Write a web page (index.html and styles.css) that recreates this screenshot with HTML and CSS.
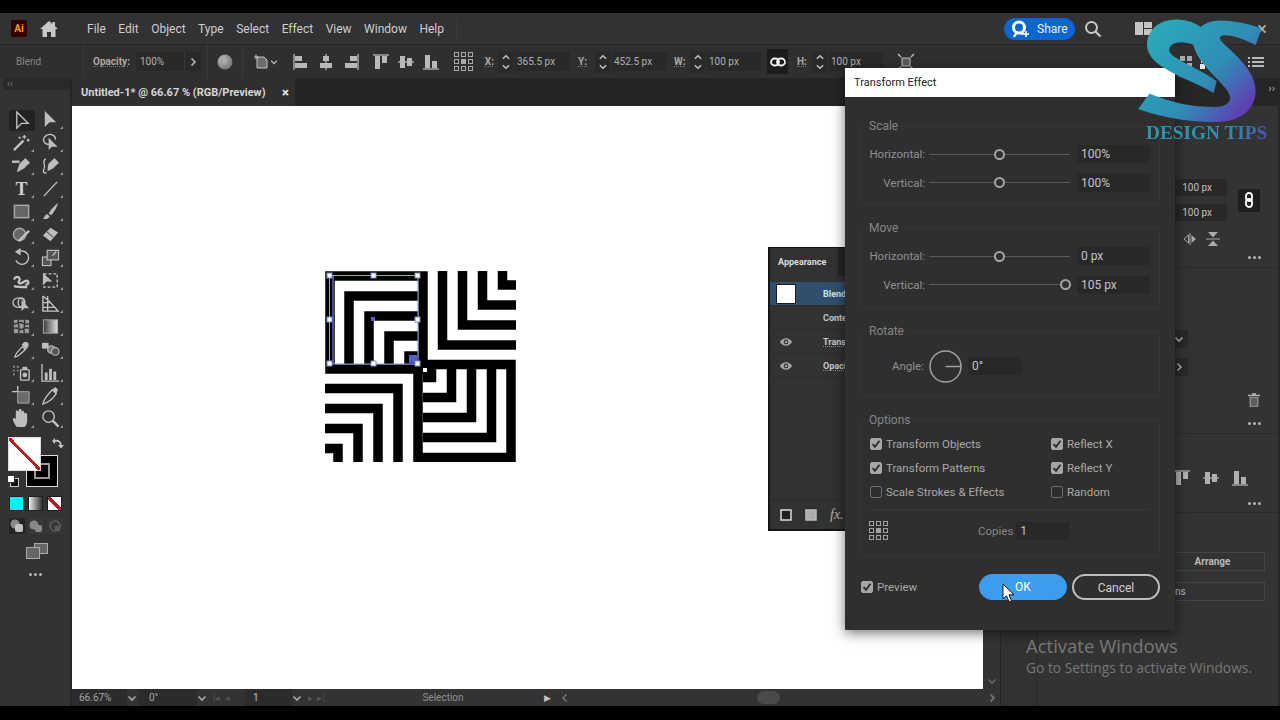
FILE: index.html
```html
<!DOCTYPE html>
<html lang="en">
<head>
    <meta charset="UTF-8">
    <title>Adobe Illustrator - Transform Effect</title>
    <link rel="stylesheet" href="styles.css">
</head>
<body>
<svg class="defs" width="0" height="0">
    <symbol id="chev-down" viewBox="0 0 10 10"><path d="M1.5 3.5 5 7l3.5-3.5" fill="none" stroke="currentColor" stroke-width="1.6"/></symbol>
    <symbol id="chev-up" viewBox="0 0 10 10"><path d="M1.5 6.5 5 3l3.5 3.5" fill="none" stroke="currentColor" stroke-width="1.6"/></symbol>
    <symbol id="chev-right" viewBox="0 0 10 10"><path d="M3.5 1.5 7 5l-3.5 3.5" fill="none" stroke="currentColor" stroke-width="1.6"/></symbol>
    <symbol id="tick" viewBox="0 0 12 12"><path d="M2.5 6.2 5 8.8l4.5-6" fill="none" stroke="#2b2b2b" stroke-width="1.8"/></symbol>
    <symbol id="al-left" viewBox="0 0 18 18"><path d="M2 1v16" stroke="currentColor" stroke-width="1.3"/><path d="M3 3h7v5H3zM3 10h12v5H3z" fill="currentColor"/></symbol>
    <symbol id="al-hc" viewBox="0 0 18 18"><path d="M9 1v16" stroke="currentColor" stroke-width="1.3"/><path d="M6 3h6v5H6zM3 10h12v5H3z" fill="currentColor"/></symbol>
    <symbol id="al-right" viewBox="0 0 18 18"><path d="M16 1v16" stroke="currentColor" stroke-width="1.3"/><path d="M8 3h7v5H8zM3 10h12v5H3z" fill="currentColor"/></symbol>
    <symbol id="al-top" viewBox="0 0 18 18"><path d="M1 2h16" stroke="currentColor" stroke-width="1.3"/><path d="M3 3h5v13H3zM10 3h5v7h-5z" fill="currentColor"/></symbol>
    <symbol id="al-vc" viewBox="0 0 18 18"><path d="M1 9h16" stroke="currentColor" stroke-width="1.3"/><path d="M3 3h5v12H3zM10 5h5v8h-5z" fill="currentColor"/></symbol>
    <symbol id="al-bottom" viewBox="0 0 18 18"><path d="M1 16h16" stroke="currentColor" stroke-width="1.3"/><path d="M3 2h5v13H3zM10 8h5v7h-5z" fill="currentColor"/></symbol>
    <symbol id="ref-grid" viewBox="0 0 19 19"><g fill="none" stroke="currentColor" stroke-width="1"><rect x=".5" y=".5" width="4" height="4"/><rect x="7.5" y=".5" width="4" height="4"/><rect x="14.5" y=".5" width="4" height="4"/><rect x=".5" y="7.5" width="4" height="4"/><rect x="14.5" y="7.5" width="4" height="4"/><rect x=".5" y="14.5" width="4" height="4"/><rect x="7.5" y="14.5" width="4" height="4"/><rect x="14.5" y="14.5" width="4" height="4"/></g><rect x="7" y="7" width="5" height="5" fill="currentColor"/></symbol>
    <symbol id="eye" viewBox="0 0 14 10"><path d="M1 5c3-5 9-5 12 0-3 5-9 5-12 0Z" fill="currentColor"/><circle cx="7" cy="5" r="2.4" fill="#323232"/><circle cx="7" cy="5" r="1.2" fill="currentColor"/></symbol>
    <symbol id="link" viewBox="0 0 16 10"><rect x="1" y="1.5" width="8" height="7" rx="3.5" fill="none" stroke="currentColor" stroke-width="1.8"/><rect x="7" y="1.5" width="8" height="7" rx="3.5" fill="none" stroke="currentColor" stroke-width="1.8"/></symbol>
</svg>

<div class="app">
    <div class="menubar">
        <div class="ai-logo">Ai</div>
        <svg class="home" width="18" height="16" viewBox="0 0 18 16"><path d="M9 0 0 8h2.5v8h4.5v-5h4v5h4.500V8H18l-3-2.700V1h-2.500v2L9 0Z" fill="#c8c8c8"/></svg>
        <div class="menu">
            <span>File</span><span>Edit</span><span>Object</span><span>Type</span><span>Select</span><span>Effect</span><span>View</span><span>Window</span><span>Help</span>
        </div>
        <div class="menu-right">
            <div class="share">
                <svg width="20" height="18" viewBox="0 0 20 18"><circle cx="8" cy="7.500" r="5.500" fill="none" stroke="#fff" stroke-width="3"/><path d="M3 17c1-3 3-4 5-4s3 .5 4 1.500" stroke="#fff" stroke-width="2.200" fill="none"/><path d="M15 11v6M12 14h6" stroke="#fff" stroke-width="1.500"/></svg>
                <span>Share</span>
            </div>
            <svg class="search" width="18" height="18" viewBox="0 0 18 18"><circle cx="7.500" cy="7.500" r="5.500" fill="none" stroke="#c8c8c8" stroke-width="2"/><path d="m11.500 11.500 5 5" stroke="#c8c8c8" stroke-width="2.200"/></svg>
            <svg class="layout-ic" width="17" height="13" viewBox="0 0 17 13"><path d="M0 0h8v13H0zM9 0h8v6H9zM9 7h8v6H9z" fill="#c4c4c4"/></svg>
            <div class="win-min"></div>
            <div class="win-close">×</div>
        </div>
    </div>

    <div class="controlbar">
        <div class="cg cg-blend">Blend</div>
        <div class="cg cg-opacity">
            <span class="ctl-label">Opacity:</span>
            <div class="ctl-input ctl-op">100%</div>
            <div class="ctl-arrow"><svg width="10" height="10"><use href="#chev-right"/></svg></div>
        </div>
        <div class="cg cg-globe">
            <svg width="16" height="16" viewBox="0 0 16 16"><defs><radialGradient id="globe" cx=".35" cy=".35" r=".8"><stop offset="0" stop-color="#bdbdbd"/><stop offset="1" stop-color="#6a6a6a"/></radialGradient></defs><circle cx="8" cy="8" r="7.500" fill="url(#globe)"/><path d="M4 4c3 1 2 3 0 4M9 2c2 3 4 4 5 4M8 10c2 0 3 2 2 4" stroke="#8d8d8d" fill="none"/></svg>
        </div>
        <div class="cg cg-doc">
            <svg width="16" height="16" viewBox="0 0 16 16"><path d="M4 3h7l3 3v8H4z" fill="#6d6d6d" stroke="#c4c4c4"/><path d="M1 3h5M3 0.500v5" stroke="#c4c4c4"/></svg>
            <svg class="doc-chev" width="8" height="8"><use href="#chev-down"/></svg>
        </div>
        <div class="cg cg-align">
            <svg width="18" height="18"><use href="#al-left"/></svg>
            <svg width="18" height="18"><use href="#al-hc"/></svg>
            <svg width="18" height="18"><use href="#al-right"/></svg>
            <svg class="al-gap" width="18" height="18"><use href="#al-top"/></svg>
            <svg width="18" height="18"><use href="#al-vc"/></svg>
            <svg width="18" height="18"><use href="#al-bottom"/></svg>
        </div>
        <div class="cg cg-grid"><svg width="19" height="19"><use href="#ref-grid"/></svg></div>
        <span class="ctl-label lb-x">X:</span>
        <div class="stepper"><svg width="10" height="9"><use href="#chev-up"/></svg><svg width="10" height="9"><use href="#chev-down"/></svg></div>
        <div class="ctl-input w-xy">365.5 px</div>
        <span class="ctl-label lb-y">Y:</span>
        <div class="stepper"><svg width="10" height="9"><use href="#chev-up"/></svg><svg width="10" height="9"><use href="#chev-down"/></svg></div>
        <div class="ctl-input w-xy">452.5 px</div>
        <span class="ctl-label lb-w">W:</span>
        <div class="stepper"><svg width="10" height="9"><use href="#chev-up"/></svg><svg width="10" height="9"><use href="#chev-down"/></svg></div>
        <div class="ctl-input w-wh">100 px</div>
        <div class="ctl-link"><svg width="16" height="10"><use href="#link"/></svg></div>
        <span class="ctl-label lb-h">H:</span>
        <div class="stepper"><svg width="10" height="9"><use href="#chev-up"/></svg><svg width="10" height="9"><use href="#chev-down"/></svg></div>
        <div class="ctl-input w-wh">100 px</div>
        <svg class="ctl-transform" width="18" height="18" viewBox="0 0 18 18"><rect x="5" y="5" width="8" height="8" fill="#5c5c5c" stroke="#c4c4c4"/><path d="M1 1l3 3M17 1l-3 3M1 17l3-3M17 17l-3-3" stroke="#c4c4c4" stroke-width="1.300"/></svg>
        <div class="ctl-end">
            <svg class="end-dist" width="14" height="14" viewBox="0 0 14 14"><path d="M1 1h5v5H1zM8 1h5v5H8zM1 8h5v5H1zM8 8h5v5H8z" fill="#a8a8a8"/></svg>
            <svg class="end-pin" width="14" height="14" viewBox="0 0 14 14"><path d="M2 0h1v8H2zM1 9h5v5H1z" fill="#e8e8e8"/></svg>
            <svg class="end-list" width="16" height="12" viewBox="0 0 16 12"><path d="M0 1h2v2H0zM4 1h12v2H4zM0 5h2v2H0zM4 5h12v2H4zM0 9h2v2H0zM4 9h12v2H4z" fill="#b8b8b8"/></svg>
        </div>
    </div>

    <div class="workspace">
        <div class="tools">
            <div class="tools-head">‹‹</div>
            <div class="tool-grid">
                <div class="tool tool-active"><svg viewBox="0 0 20 20"><path d="M4 1v17l5-5h7z" class="st"/></svg></div>
                <div class="tool"><svg viewBox="0 0 20 20"><path d="M4 1v17l5-5h7z" class="fl"/></svg></div>
                <div class="tool"><svg viewBox="0 0 20 20"><path d="m2 18 10-10" class="st thick"/><path d="M13 2v4M11 4h4M17 6v3M15.500 7.500h3M8 4v2M7 5h2" class="st"/></svg></div>
                <div class="tool"><svg viewBox="0 0 20 20"><path d="M9 12C2 12 1 6 5 3c4-3 11-1 10 4" class="st"/><path d="M8 5v13l3.500-3.500h6z" class="fl"/></svg></div>
                <div class="tool"><svg viewBox="0 0 20 20"><path d="M0 6h8" class="st thick"/><path d="M8 8c3-3 5-5 6-6l5 5c-1 1-4 3-6 6-2 1-5 3-8 4 1-3 2-6 3-9z" class="fl"/></svg></div>
                <div class="tool"><svg viewBox="0 0 20 20"><path d="M8 8c3-3 5-5 6-6l5 5c-1 1-4 3-6 6l-6 3c0-2 0-5 1-8z" class="fl"/><path d="M5 3C0 6 6 10 3 14c-1 2-1 4 3 4" class="st"/></svg></div>
                <div class="tool"><span class="t-glyph">T</span></div>
                <div class="tool"><svg viewBox="0 0 20 20"><path d="M3 18 17 3" class="st"/></svg></div>
                <div class="tool"><svg viewBox="0 0 20 20"><rect x="2.500" y="3.500" width="15" height="13" fill="#666" stroke="#a8a8a8" stroke-width="1.500"/></svg></div>
                <div class="tool"><svg viewBox="0 0 20 20"><path d="M18 1c-3 2-7 6-10 11l3 2c3-4 6-9 7-13z" class="fl"/><path d="M7 13c-3 0-3 3-5 5 3 0 6 0 7-3z" class="fl"/></svg></div>
                <div class="tool"><svg viewBox="0 0 20 20"><circle cx="8" cy="10" r="6.500" fill="#666" stroke="#a8a8a8" stroke-width="1.500"/><path d="m7 17 11-11" class="st thick"/></svg></div>
                <div class="tool"><svg viewBox="0 0 20 20"><path d="m2 11 8-8 8 5-8 9z" class="fl"/><path d="m6 7 7 6" stroke="#333" stroke-width="1"/></svg></div>
                <div class="tool"><svg viewBox="0 0 20 20"><path d="M7 4a7 7 0 1 1-3 9" class="st"/><path d="M9 0v8L3 4z" class="fl"/></svg></div>
                <div class="tool"><svg viewBox="0 0 20 20"><rect x="1.500" y="9.500" width="9" height="9" fill="#555" class="st-b"/><rect x="6.500" y="2.500" width="12" height="10" fill="#555" class="st-b"/><path d="m12 8 4-4" class="st"/></svg></div>
                <div class="tool"><svg viewBox="0 0 20 20"><path d="M2 9c2-4 5-3 6-1s-3 4 0 5 6-5 9-2c1 2-1 4-3 3M2 16c4 1 9 1 14 1" class="st thick"/></svg></div>
                <div class="tool"><svg viewBox="0 0 20 20"><path d="M3 3h14v14H3z" stroke-dasharray="3 2" class="st"/><path d="M2 2v13l4-4h6z" class="fl"/></svg></div>
                <div class="tool"><svg viewBox="0 0 20 20"><ellipse cx="7" cy="9" rx="6" ry="5" class="st"/><ellipse cx="10" cy="9" rx="3.500" ry="5" class="st"/><path d="M10 6v12l3-3h5z" class="fl"/></svg></div>
                <div class="tool"><svg viewBox="0 0 20 20"><path d="M2 2v16h16L9 8 2 2" class="st"/><path d="M7 2v16M2 9h7M2 14h12" class="st"/></svg></div>
                <div class="tool"><svg viewBox="0 0 20 20"><rect x="2" y="3" width="16" height="14" fill="#999"/><path d="M2 7c4 1 4-2 8-1s4 3 8 1M2 12c4-2 5 2 8 1s5-3 8-1M7 3c-2 4 2 6 0 14M13 3c2 4-2 8 0 14" stroke="#333" stroke-width="1.500" fill="none"/></svg></div>
                <div class="tool"><svg viewBox="0 0 20 20"><defs><linearGradient id="grad-tool"><stop offset="0" stop-color="#3c3c3c"/><stop offset="1" stop-color="#e0e0e0"/></linearGradient></defs><rect x="2.500" y="3" width="15" height="14" fill="url(#grad-tool)" stroke="#aaa"/></svg></div>
                <div class="tool"><svg viewBox="0 0 20 20"><path d="M3 18c0-3 5-8 8-11l3 3c-3 3-8 8-11 8z" class="st"/><path d="m10 5 5 5 2-3c2-3-2-7-5-4z" class="fl"/></svg></div>
                <div class="tool"><svg viewBox="0 0 20 20"><path d="M1 3h7v6H1z" class="fl"/><circle cx="11" cy="10" r="4" fill="#777" class="st-b"/><circle cx="15" cy="12" r="4" fill="#555" class="st-b"/></svg></div>
                <div class="tool"><svg viewBox="0 0 20 20"><rect x="9" y="7" width="9" height="11" rx="1" class="st"/><circle cx="13.500" cy="12.500" r="2.500" class="fl"/><path d="M11 7V4h5v3" class="fl"/><path d="M1 3h2v2H1zM5 3h2v2H5zM1 7h2v2H1zM5 7h2v2H5zM1 11h2v2H1z" fill="#8a8a8a"/></svg></div>
                <div class="tool"><svg viewBox="0 0 20 20"><path d="M1 1v18h18" class="st"/><path d="M4 10h3v8H4zM8.500 6h3v12h-3zM13 9h3v9h-3z" class="fl"/></svg></div>
                <div class="tool"><svg viewBox="0 0 20 20"><path d="M6 6h12v12H6z" fill="#6a6a6a" stroke="#aaa"/><path d="M0 6h6M6 0v6" class="st"/></svg></div>
                <div class="tool"><svg viewBox="0 0 20 20"><path d="M2 19c1-5 7-12 10-15l4 4c-3 5-9 10-14 11z" class="st"/><path d="M12 4 15 1l3 3-2 4z" class="fl"/></svg></div>
                <div class="tool"><svg viewBox="0 0 20 20"><path d="M5 19c-2-3-4-6-4-8s2-2 3 0V3c0-2 2-2 3 0V1.500c0-2 3-2 3 0V3c0-2 3-1.500 3 .5V5c1-1.500 3-1 3 1v6c0 4-2 7-4 7z" class="fl"/></svg></div>
                <div class="tool"><svg viewBox="0 0 20 20"><circle cx="8" cy="8" r="6" class="st"/><path d="m12.500 12.500 6 6" class="st thick"/></svg></div>
            </div>

            <div class="fillstroke">
                <div class="fs-stroke"><div class="fs-stroke-in"></div></div>
                <div class="fs-fill"></div>
                <svg class="fs-swap" width="12" height="12" viewBox="0 0 12 12"><path d="M2 4c5-1 7 1 7 5" fill="none" stroke="#c4c4c4" stroke-width="1.800"/><path d="M0 4l3-3v6zM6 8h6l-3 3.500z" fill="#c4c4c4"/></svg>
                <svg class="fs-default" width="12" height="12" viewBox="0 0 12 12"><rect x="3.500" y="3.500" width="8" height="8" fill="#111" stroke="#ccc"/><rect x=".5" y=".5" width="7" height="7" fill="#fff" stroke="#333"/></svg>
            </div>

            <div class="color-modes">
                <div class="cm cm-color"></div>
                <div class="cm cm-grad"></div>
                <div class="cm cm-none"></div>
            </div>

            <div class="draw-modes">
                <div class="dm dm-on"><svg width="14" height="14" viewBox="0 0 14 14"><circle cx="5" cy="5" r="4.500" fill="#8a8a8a"/><rect x="5" y="5" width="8" height="8" rx="2" fill="#c0c0c0"/></svg></div>
                <div class="dm"><svg width="14" height="14" viewBox="0 0 14 14"><circle cx="5" cy="6" r="4.500" fill="#888"/><rect x="6" y="6" width="7" height="7" rx="2" fill="#8a8a8a"/></svg></div>
                <div class="dm"><svg width="14" height="14" viewBox="0 0 14 14"><circle cx="7" cy="7" r="5" fill="none" stroke="#5a5a5a" stroke-width="1.500"/><path d="M7 7h5v5H7z" fill="#5a5a5a"/></svg></div>
            </div>

            <svg class="screen-mode" width="22" height="16" viewBox="0 0 22 16"><rect x="8.500" y=".5" width="13" height="10" fill="#666" stroke="#aaa"/><rect x=".5" y="4.500" width="13" height="11" fill="#666" stroke="#aaa"/></svg>
            <div class="dots tool-dots"><i></i><i></i><i></i></div>
        </div>

        <div class="center">
            <div class="tabs">
                <div class="tab"><span>Untitled-1* @ 66.67 % (RGB/Preview)</span><b>×</b></div>
            </div>
            <div class="canvas-row">
                <div class="canvas">
                    <svg class="artwork" width="191" height="191" viewBox="0 0 191 191">
                        <g fill="none" stroke="#000" stroke-width="9.500">
                            <rect x="5" y="5" width="93" height="93"/>
                            <path d="M24 93V25h69M44 93V45h49M64 93V65h29M84 93V85h9"/>
                            <path d="M117.500 0v74H191M137.500 0v54H191M157.500 0v34H191M177.500 0v14H191"/>
                            <path d="M0 117.500h73V191M0 137.500h53V191M0 157.500h33V191M0 177.500h13V191"/>
                            <rect x="93" y="93.500" width="93" height="93"/>
                            <path d="M98 166.500h68.500V98M98 146.500h48.500V98M98 126.500h28.500V98M98 106.500h8.500V98"/>
                        </g>
                        <rect x="98" y="97" width="4" height="4" fill="#fff"/>
                        <rect x="4.500" y="4.500" width="88.500" height="88.500" fill="none" stroke="#8f9bea" stroke-width="1"/>
                        <path d="M8 4.500V93" stroke="#8f9bea" stroke-width="1"/>
                        <rect x="84" y="84" width="8" height="8" fill="#4960c9"/>
                        <g fill="#fff" stroke="#7d8be0" stroke-width="1">
                            <rect x="2" y="2" width="5" height="5"/>
                            <rect x="46" y="2" width="5" height="5"/>
                            <rect x="90" y="2" width="5" height="5"/>
                            <rect x="2" y="46" width="5" height="5"/>
                            <rect x="90" y="46" width="5" height="5"/>
                            <rect x="2" y="90" width="5" height="5"/>
                            <rect x="46" y="90" width="5" height="5"/>
                            <rect x="90" y="90" width="5" height="5"/>
                        </g>
                        <rect x="46" y="46" width="4" height="4" fill="#5566c8"/>
                    </svg>
                </div>
                <div class="vscroll"><svg width="10" height="10"><use href="#chev-down"/></svg></div>
            </div>
            <div class="statusbar">
                <span class="sb-zoom">66.67%</span>
                <svg class="sb-chev" width="10" height="10"><use href="#chev-down"/></svg>
                <span class="sb-rot">0°</span>
                <svg class="sb-chev" width="10" height="10"><use href="#chev-down"/></svg>
                <span class="sb-nav sb-nav-first">|◂&nbsp;&nbsp;◂</span>
                <span class="sb-page">1</span>
                <svg class="sb-chev" width="10" height="10"><use href="#chev-down"/></svg>
                <span class="sb-nav">▸&nbsp;&nbsp;▸|</span>
                <span class="sb-tool">Selection</span>
                <span class="sb-play">▶</span>
                <svg class="sb-left" width="10" height="10" viewBox="0 0 10 10"><path d="M6.500 1.500 3 5l3.500 3.500" fill="none" stroke="#777" stroke-width="1.400"/></svg>
                <div class="sb-thumb"></div>
                <svg class="sb-right" width="10" height="10"><use href="#chev-right"/></svg>
            </div>
        </div>

        <div class="right">
            <div class="dock"></div>
            <div class="props">
                <div class="props-tabs">››</div>
                <div class="props-sec sec-transform">
                    <div class="wh-row">
                        <div class="wh-col">
                            <div class="prop-input">100 px</div>
                            <div class="prop-input">100 px</div>
                        </div>
                        <div class="prop-link"><svg width="10" height="16" viewBox="0 0 10 16"><rect x="2" y="1" width="6" height="8" rx="3" fill="none" stroke="#fff" stroke-width="1.800"/><rect x="2" y="7" width="6" height="8" rx="3" fill="none" stroke="#fff" stroke-width="1.800"/></svg></div>
                    </div>
                    <div class="flip-row">
                        <svg width="14" height="12" viewBox="0 0 14 12"><path d="M7 0v12" stroke="#aaa"/><path d="M5.500 2v8L1 6z" fill="none" stroke="#aaa"/><path d="M8.500 2v8L13 6z" fill="#aaa"/></svg>
                        <svg width="14" height="14" viewBox="0 0 14 14"><path d="M0 7h14" stroke="#aaa"/><path d="M2 0h10L7 5.500z" fill="#aaa"/><path d="M2 14h10L7 8.500z" fill="#aaa"/></svg>
                    </div>
                    <div class="dots"><i></i><i></i><i></i></div>
                </div>
                <div class="props-sec sec-appear">
                    <div class="prop-chev"><svg width="10" height="10"><use href="#chev-down"/></svg></div>
                    <div class="prop-chev"><svg width="10" height="10"><use href="#chev-right"/></svg></div>
                    <svg class="trash" width="12" height="14" viewBox="0 0 12 14"><path d="M4 1h4M0 2.500h12" stroke="#b0b0b0" stroke-width="1.300"/><path d="M1.500 4h9v10h-9z" fill="#8a8a8a"/><path d="M4 5v8M6 5v8M8 5v8" stroke="#333"/></svg>
                    <div class="dots"><i></i><i></i><i></i></div>
                </div>
                <div class="props-sec sec-align">
                    <div class="prop-align">
                        <svg width="18" height="18"><use href="#al-top"/></svg>
                        <svg width="18" height="18"><use href="#al-vc"/></svg>
                        <svg width="18" height="18"><use href="#al-bottom"/></svg>
                    </div>
                    <div class="dots"><i></i><i></i><i></i></div>
                </div>
                <div class="props-sec sec-actions">
                    <div class="prop-btn">Arrange</div>
                    <div class="prop-btn prop-btn-wide">Options</div>
                </div>
            </div>
        </div>
    </div>
</div>

<div class="appearance">
    <div class="ap-head"><span class="ap-tab">Appearance</span></div>
    <div class="ap-row ap-row-sel"><span class="ap-swatch"></span><span class="ap-name">Blend</span></div>
    <div class="ap-row"><span class="ap-name ap-plain">Contents</span></div>
    <div class="ap-row"><svg class="ap-eye" width="14" height="10"><use href="#eye"/></svg><span class="ap-name ap-link">Transform</span></div>
    <div class="ap-row"><svg class="ap-eye" width="14" height="10"><use href="#eye"/></svg><span class="ap-name ap-link">Opacity</span></div>
    <div class="ap-foot">
        <svg width="12" height="12" viewBox="0 0 12 12"><rect x="1" y="1" width="10" height="10" fill="#222" stroke="#ddd" stroke-width="1.500"/></svg>
        <svg width="12" height="12" viewBox="0 0 12 12"><rect x="1" y="1" width="10" height="10" fill="#aaa" stroke="#bbb" stroke-width="1.500"/></svg>
        <span class="ap-fx">fx.</span>
    </div>
</div>

<div class="dialog">
    <div class="dialog-title">Transform Effect</div>
    <div class="dialog-body">
        <fieldset class="group group-scale">
            <legend>Scale</legend>
            <div class="row">
                <label>Horizontal:</label>
                <div class="track"><span class="knob"></span></div>
                <div class="field">100%</div>
            </div>
            <div class="row">
                <label>Vertical:</label>
                <div class="track"><span class="knob"></span></div>
                <div class="field">100%</div>
            </div>
        </fieldset>
        <fieldset class="group">
            <legend>Move</legend>
            <div class="row">
                <label>Horizontal:</label>
                <div class="track"><span class="knob"></span></div>
                <div class="field">0 px</div>
            </div>
            <div class="row">
                <label>Vertical:</label>
                <div class="track"><span class="knob knob-end"></span></div>
                <div class="field">105 px</div>
            </div>
        </fieldset>
        <fieldset class="group group-rotate">
            <legend>Rotate</legend>
            <div class="angle-row">
                <label>Angle:</label>
                <svg class="dial" width="33" height="33" viewBox="0 0 33 33"><circle cx="16.500" cy="16.500" r="15.500" fill="none" stroke="#a0a0a0" stroke-width="1.500"/><path d="M16.500 16.500H32" stroke="#a0a0a0" stroke-width="1.500"/></svg>
                <div class="field field-angle">0°</div>
            </div>
        </fieldset>
        <fieldset class="group">
            <legend>Options</legend>
            <div class="opts">
                <div class="opt"><span class="check check-on"><svg width="12" height="12"><use href="#tick"/></svg></span>Transform Objects</div>
                <div class="opt"><span class="check check-on"><svg width="12" height="12"><use href="#tick"/></svg></span>Reflect X</div>
                <div class="opt"><span class="check check-on"><svg width="12" height="12"><use href="#tick"/></svg></span>Transform Patterns</div>
                <div class="opt"><span class="check check-on"><svg width="12" height="12"><use href="#tick"/></svg></span>Reflect Y</div>
                <div class="opt"><span class="check"></span>Scale Strokes &amp; Effects</div>
                <div class="opt"><span class="check"></span>Random</div>
            </div>
            <div class="copies-row">
                <svg class="copies-grid" width="19" height="19"><use href="#ref-grid"/></svg>
                <span class="copies-label">Copies</span>
                <div class="field field-copies">1</div>
            </div>
        </fieldset>
        <div class="dialog-foot">
            <div class="opt opt-preview"><span class="check check-on"><svg width="12" height="12"><use href="#tick"/></svg></span>Preview</div>
            <div class="btn btn-ok">OK</div>
            <div class="btn btn-cancel">Cancel</div>
        </div>
    </div>
</div>

<svg class="cursor" width="14" height="20" viewBox="0 0 14 20"><path d="M1 1v15l3.500-3.200 2.500 6 2.500-1-2.500-6H12z" fill="#fff" stroke="#1b1b1b" stroke-width="1"/></svg>

<div class="activate">
    <div class="activate-big">Activate Windows</div>
    <div class="activate-small">Go to Settings to activate Windows.</div>
</div>

<div class="watermark">
    <svg width="160" height="112" viewBox="0 0 480 336">
        <defs>
            <linearGradient id="logo-grad" gradientUnits="userSpaceOnUse" x1="110" y1="60" x2="400" y2="320">
                <stop offset="0" stop-color="#2aa8b8"/>
                <stop offset=".55" stop-color="#2f8db6"/>
                <stop offset="1" stop-color="#6a2db0"/>
            </linearGradient>
        </defs>
        <path d="M250 62C200 20 110 20 88 85c-16 55 42 85 92 110 40 17 70 30 98 47l7-27c-35-25-95-50-130-75-25-20-10-48 30-48 20 0 40 8 60 20z" fill="url(#logo-grad)" stroke="url(#logo-grad)" stroke-width="9"/>
        <path d="M420 58 405 100c-30-15-65-28-90-28-20 0-25 13-10 28 25 25 70 60 90 105 25 60-10 115-75 125-80 10-190-10-260-35l30-40c60 25 130 40 190 40 50 0 65-25 45-55-30-40-85-80-100-130-10-40 25-75 75-75 40 0 90 10 120 23z" fill="url(#logo-grad)" stroke="url(#logo-grad)" stroke-width="7"/>
    </svg>
    <div class="watermark-text">DESIGN TIPS</div>
</div>
</body>
</html>
```

FILE: styles.css
```css
* {
    box-sizing: border-box;
}

body {
    margin: 0;
    width: 1280px;
    height: 720px;
    overflow: hidden;
    background: #000;
    font-family: Roboto, "Liberation Sans", sans-serif;
    font-size: 12px;
    color: #c8c8c8;
    position: relative;
}

.defs {
    position: absolute;
}

.app {
    margin-top: 13px;
    height: 693px;
    display: flex;
    flex-direction: column;
    background: #323232;
}

/* menu bar */
.menubar {
    height: 32px;
    display: flex;
    align-items: center;
    background: #323232;
    border-bottom: 1px solid #262626;
}

.ai-logo {
    width: 16px;
    height: 17px;
    margin-left: 11px;
    background: #330000;
    border-radius: 2px;
    color: #ff9a00;
    font-size: 10px;
    font-weight: 700;
    line-height: 17px;
    text-align: center;
}

.home {
    margin-left: 13px;
}

.menu {
    display: flex;
    gap: 12.5px;
    margin-left: 29px;
    padding-right: 12px;
    border-right: 1px solid #3c3c3c;
    color: #cfcfcf;
    line-height: 20px;
}

.menu-right {
    margin-left: auto;
    display: flex;
    align-items: center;
}

.share {
    width: 71px;
    height: 22px;
    border-radius: 11px;
    background: #0d66d0;
    color: #e8f1fb;
    display: flex;
    align-items: center;
    gap: 6px;
    padding-left: 7px;
}

.search {
    margin-left: 9px;
}

.layout-ic {
    margin-left: 33px;
}

.win-min {
    width: 10px;
    height: 2px;
    background: #bbb;
    margin-left: 52px;
}

.win-close {
    width: 20px;
    margin-left: 38px;
    margin-right: 8px;
    color: #b5b5b5;
    font-size: 18px;
    line-height: 20px;
    text-align: center;
}

/* control bar */
.controlbar {
    height: 33px;
    display: flex;
    align-items: center;
    background: #2f2f2f;
    font-size: 10px;
    color: #a8a8a8;
}

.cg {
    display: flex;
    align-items: center;
    height: 100%;
    flex-shrink: 0;
}

.cg-blend {
    width: 84px;
    padding-left: 16px;
    color: #858585;
    border-right: 1px solid #3a3a3a;
}

.cg-opacity {
    width: 124px;
    padding-left: 9px;
    border-right: 1px solid #3a3a3a;
}

.ctl-label {
    color: #a8a8a8;
    font-weight: 700;
    text-decoration: underline dotted #777;
}

.ctl-input {
    height: 19px;
    background: #292929;
    color: #b0b0b0;
    line-height: 19px;
    padding-left: 4px;
}

.ctl-op {
    width: 48px;
    margin-left: 6px;
}

.ctl-arrow {
    width: 17px;
    height: 19px;
    background: #292929;
    border-left: 1px solid #383838;
    color: #b5b5b5;
    display: flex;
    align-items: center;
    justify-content: center;
}

.cg-globe {
    width: 35px;
    padding-left: 9px;
    border-right: 1px solid #3a3a3a;
}

.cg-doc {
    width: 47px;
    padding-left: 10px;
    gap: 1px;
    color: #bbb;
}

.cg-align {
    width: 164px;
    gap: 7px;
    padding-left: 2px;
    color: #b8b8b8;
}

.al-gap {
    margin-left: 5px;
}

.cg-grid {
    width: 25px;
    color: #a8a8a8;
}

.lb-x {
    width: 16px;
    text-align: right;
    padding-right: 1px;
}

.lb-y {
    width: 22px;
    padding-left: 8px;
}

.lb-w {
    width: 20px;
    padding-left: 7px;
}

.lb-h {
    width: 21px;
    padding-left: 9px;
}

.lb-y,
.lb-w,
.lb-h {
    flex-shrink: 0;
}

.stepper {
    width: 15px;
    height: 22px;
    margin-left: 3px;
    margin-right: 2px;
    background: #292929;
    color: #c4c4c4;
    display: flex;
    flex-direction: column;
    align-items: center;
    justify-content: center;
}

.w-xy {
    width: 55px;
    padding-left: 2px;
    flex-shrink: 0;
}

.w-wh {
    width: 54px;
    padding-left: 2px;
    flex-shrink: 0;
}

.ctl-link {
    width: 21px;
    height: 25px;
    margin-left: 6px;
    background: #1c1c1c;
    color: #f0f0f0;
    display: flex;
    align-items: center;
    justify-content: center;
    flex-shrink: 0;
}

.ctl-transform {
    margin-left: 14px;
    flex-shrink: 0;
}

.ctl-end {
    margin-left: auto;
    margin-right: 16px;
    display: flex;
    align-items: center;
}

.end-pin {
    margin-left: 6px;
}

.end-list {
    margin-left: 35px;
}

/* workspace */
.workspace {
    flex: 1;
    display: flex;
    min-height: 0;
}

.tools {
    width: 72px;
    flex-shrink: 0;
    padding-left: 3px;
    background: #333;
    border-right: 2px solid #262626;
    display: flex;
    flex-direction: column;
}

.tools-head {
    height: 12px;
    background: #2a2a2a;
    color: #777;
    font-size: 10px;
    line-height: 11px;
    padding-left: 4px;
}

.tool-grid {
    display: grid;
    grid-template-columns: 29px 29px;
    grid-auto-rows: 23px;
    margin: 18px 0 0 4px;
}

.tool {
    display: flex;
    align-items: center;
    justify-content: center;
    position: relative;
}

.tool svg {
    width: 19px;
    height: 19px;
}

.tool-active {
    background: #232323;
    border-radius: 2px;
    margin: 2px 1px 0 2px;
}

.tool:not(.tool-active)::after {
    content: "";
    position: absolute;
    right: 2px;
    bottom: 2px;
    border-left: 3px solid transparent;
    border-bottom: 3px solid #999;
}

.st {
    fill: none;
    stroke: #c4c4c4;
    stroke-width: 1.4;
}

.st-b {
    stroke: #bdbdbd;
    stroke-width: 1.2;
}

.thick {
    stroke-width: 2.4;
}

.fl {
    fill: #bdbdbd;
}

.t-glyph {
    font-family: "Liberation Serif", serif;
    font-weight: 700;
    font-size: 18px;
    line-height: 20px;
    color: #cfcfcf;
}

.fillstroke {
    height: 52px;
    margin-top: 7px;
    position: relative;
}

.fs-fill {
    position: absolute;
    left: 5px;
    top: 0;
    width: 33px;
    height: 34px;
    border: 1px solid #ddd;
    background: linear-gradient(to top right, #fff calc(50% - 1.5px), #b02028 calc(50% - 1.5px), #b02028 calc(50% + 1.5px), #fff calc(50% + 1.5px));
}

.fs-stroke {
    position: absolute;
    left: 23px;
    top: 18px;
    width: 32px;
    height: 32px;
    background: #000;
    border: 1px solid #ddd;
    padding: 7px;
}

.fs-stroke-in {
    width: 100%;
    height: 100%;
    border: 2px solid #9a9a9a;
}

.fs-swap {
    position: absolute;
    left: 49px;
    top: 0;
}

.fs-default {
    position: absolute;
    left: 4px;
    top: 38px;
}

.color-modes {
    display: flex;
    gap: 6px;
    margin: 8px 0 0 7px;
}

.cm {
    width: 13px;
    height: 13px;
    outline: 1px solid #1f1f1f;
}

.cm-color {
    background: #00f4f4;
}

.cm-grad {
    background: linear-gradient(to right, #eee, #333);
}

.cm-none {
    background: linear-gradient(to top right, #fff calc(50% - 1.5px), #b02028 calc(50% - 1.5px), #b02028 calc(50% + 1.5px), #fff calc(50% + 1.5px));
}

.draw-modes {
    display: flex;
    gap: 3px;
    margin: 8px 0 0 6px;
}

.dm {
    width: 16px;
    height: 16px;
    display: flex;
    align-items: center;
    justify-content: center;
    background: #383838;
}

.dm-on {
    background: #252525;
}

.screen-mode {
    margin: 9px 0 0 23px;
}

.tool-dots {
    margin: 14px 0 0 26px;
}

.dots {
    display: flex;
    gap: 2px;
}

.dots i {
    width: 3px;
    height: 3px;
    border-radius: 50%;
    background: #b5b5b5;
}

/* document area */
.center {
    flex: 1;
    display: flex;
    flex-direction: column;
    min-width: 0;
}

.tabs {
    height: 28px;
    background: #242424;
    display: flex;
}

.tab {
    width: 223px;
    display: flex;
    align-items: center;
    justify-content: space-between;
    padding: 0 6px 0 9px;
    background: #2f2f2f;
    color: #d6d6d6;
    font-size: 11px;
    font-weight: 700;
}

.tab b {
    font-size: 13px;
    color: #e0e0e0;
}

.canvas-row {
    flex: 1;
    display: flex;
    min-height: 0;
}

.canvas {
    flex: 1;
    background: #fff;
    position: relative;
}

.artwork {
    position: absolute;
    left: 253px;
    top: 165px;
}

.vscroll {
    width: 17px;
    background: #333;
    color: #666;
    display: flex;
    align-items: flex-end;
    justify-content: center;
    padding-bottom: 3px;
}

.statusbar {
    height: 17px;
    display: flex;
    align-items: center;
    background: #333;
    font-size: 10px;
    color: #a5a5a5;
    position: relative;
}

.sb-zoom {
    width: 55px;
    padding-left: 7px;
    background: #2b2b2b;
    line-height: 17px;
}

.sb-chev {
    color: #a8a8a8;
    flex-shrink: 0;
}

.sb-rot {
    width: 58px;
    padding-left: 10px;
    margin-left: 2px;
    background: #2b2b2b;
    line-height: 17px;
}

.sb-nav {
    width: 40px;
    margin-left: 6px;
    color: #555;
    font-size: 9px;
    white-space: nowrap;
}

.sb-nav-first {
    width: 32px;
}

.sb-page {
    width: 47px;
    padding-left: 8px;
    color: #c0c0c0;
    background: #2b2b2b;
    line-height: 17px;
}

.sb-tool {
    width: 190px;
    color: #8f8f8f;
    text-align: center;
}

.sb-play {
    color: #c0c0c0;
    font-size: 9px;
    margin-left: 6px;
}

.sb-left {
    margin-left: 9px;
}

.sb-thumb {
    position: absolute;
    left: 685px;
    top: 2px;
    width: 23px;
    height: 13px;
    border-radius: 7px;
    background: #4a4a4a;
}

.sb-right {
    margin-left: auto;
    margin-right: 3px;
    color: #777;
}

/* right side */
.right {
    width: 280px;
    flex-shrink: 0;
    display: flex;
    background: #333;
    border-left: 1px solid #262626;
}

.dock {
    width: 37px;
    border-right: 1px solid #282828;
    background: #323232;
}

.props {
    flex: 1;
    display: flex;
    flex-direction: column;
    border-right: 2px solid #272727;
}

.props-tabs {
    height: 28px;
    background: #262626;
    color: #999;
    font-size: 11px;
    font-weight: 700;
    line-height: 22px;
    text-align: right;
    padding-right: 3px;
}

.props-sec {
    display: flex;
    flex-direction: column;
    align-items: flex-end;
    padding-right: 17px;
    border-bottom: 1px solid #2a2a2a;
}

.sec-transform {
    height: 162px;
    padding-top: 73px;
}

.wh-row {
    display: flex;
    align-items: center;
    gap: 11px;
    padding-right: 1px;
}

.wh-col {
    display: flex;
    flex-direction: column;
    gap: 8px;
}

.prop-input {
    width: 60px;
    height: 17px;
    background: #282828;
    color: #c0c0c0;
    font-size: 10px;
    line-height: 17px;
    text-align: right;
    padding-right: 15px;
}

.prop-link {
    width: 22px;
    height: 23px;
    background: #1f1f1f;
    display: flex;
    align-items: center;
    justify-content: center;
}

.flip-row {
    display: flex;
    gap: 9px;
    align-items: center;
    margin: 11px 41px 0 0;
}

.sec-transform .dots {
    margin-top: 10px;
}

.sec-appear {
    height: 166px;
    padding-top: 62px;
}

.prop-chev {
    width: 30px;
    height: 18px;
    margin-right: 73px;
    margin-bottom: 10px;
    background: #292929;
    color: #aaa;
    display: flex;
    align-items: center;
    justify-content: flex-end;
    padding-right: 4px;
}

.trash {
    margin: 7px 1px 0 0;
}

.sec-appear .dots {
    margin-top: 15px;
}

.sec-align {
    height: 79px;
    padding-top: 35px;
}

.prop-align {
    display: flex;
    gap: 11px;
    margin-right: 12px;
    color: #b0b0b0;
}

.sec-align .dots {
    margin-top: 15px;
}

.sec-actions {
    border-bottom: 0;
    padding-top: 39px;
    gap: 11px;
    padding-right: 13px;
}

.prop-btn {
    width: 105px;
    height: 19px;
    border: 1px solid #454545;
    color: #b8b8b8;
    font-size: 10px;
    font-weight: 700;
    line-height: 17px;
    text-align: center;
}

.prop-btn-wide {
    width: 205px;
    text-align: left;
    padding-left: 90px;
    white-space: nowrap;
    font-weight: 400;
}

/* appearance panel */
.appearance {
    position: absolute;
    left: 768px;
    top: 247px;
    width: 200px;
    height: 284px;
    background: #323232;
    border: 1px solid #161616;
    border-width: 1px 1px 2px 2px;
    font-size: 9px;
    font-weight: 700;
    color: #cfcfcf;
    display: flex;
    flex-direction: column;
}

.ap-head {
    height: 28px;
    background: #262626;
    display: flex;
}

.ap-tab {
    width: 68px;
    background: #323232;
    padding-left: 8px;
    line-height: 28px;
    color: #dcdcdc;
}

.ap-row {
    height: 24px;
    display: flex;
    align-items: center;
    position: relative;
    border-bottom: 1px solid #2c2c2c;
}

.ap-row-sel {
    margin-top: 6px;
    background: #2f4f6d;
}

.ap-swatch {
    position: absolute;
    left: 7px;
    top: 3px;
    width: 18px;
    height: 18px;
    background: #fff;
    outline: 1px solid #1b1b1b;
}

.ap-eye {
    position: absolute;
    left: 9px;
    color: #a8a8a8;
}

.ap-name {
    margin-left: 53px;
    color: #cfe0ee;
}

.ap-plain,
.ap-link {
    color: #c8c8c8;
}

.ap-link {
    text-decoration: underline dotted #888;
}

.ap-foot {
    margin-top: auto;
    height: 30px;
    display: flex;
    align-items: center;
    gap: 13px;
    padding-left: 10px;
    border-top: 1px solid #2a2a2a;
    color: #b0b0b0;
}

.ap-fx {
    font-family: "Liberation Serif", serif;
    font-style: italic;
    font-weight: 400;
    font-size: 14px;
}

/* dialog */
.dialog {
    position: absolute;
    left: 845px;
    top: 68px;
    width: 330px;
    height: 562px;
    background: #2f2f2f;
    box-shadow: 0 3px 12px rgba(0, 0, 0, 0.55);
}

.dialog-title {
    height: 29px;
    background: #fff;
    color: #222;
    font-size: 11px;
    line-height: 29px;
    padding-left: 9px;
}

.dialog-body {
    padding: 21px 15px 0;
}

.group {
    margin: 0 0 15px;
    padding: 0 9px 8px 8px;
    min-width: 0;
    border: 1px solid #373737;
    border-radius: 2px;
}

.group-scale {
    padding-bottom: 7px;
}

.group-rotate {
    padding-bottom: 10px;
}

.group legend {
    padding: 0 3px 0 0;
    height: 16px;
    line-height: 16px;
    color: #858585;
}

.row {
    height: 28.5px;
    display: flex;
    align-items: center;
    font-size: 11.5px;
}

.row:first-of-type {
    margin-top: 6px;
}

.row label {
    width: 56px;
    flex-shrink: 0;
    text-align: right;
    color: #8f8f8f;
    white-space: nowrap;
}

.track {
    width: 141px;
    height: 1px;
    margin: 0 7px 0 4px;
    background: #5a5a5a;
    position: relative;
}

.knob {
    position: absolute;
    left: 50%;
    top: -5px;
    width: 11px;
    height: 11px;
    margin-left: -6px;
    border-radius: 50%;
    background: #2f2f2f;
    border: 2px solid #a4a4a4;
}

.knob-end {
    left: 97%;
}

.field {
    width: 73px;
    height: 18px;
    background: #282828;
    color: #c4c4c4;
    font-size: 12px;
    line-height: 18px;
    padding-left: 4px;
}

.angle-row {
    height: 40px;
    margin-top: 7px;
    display: flex;
    align-items: center;
    font-size: 11.5px;
}

.angle-row label {
    width: 55px;
    text-align: right;
    color: #8f8f8f;
}

.dial {
    margin-left: 5px;
}

.field-angle {
    width: 54px;
    margin-left: 6px;
}

.opts {
    display: grid;
    grid-template-columns: 181px 1fr;
    grid-auto-rows: 24px;
    margin-top: 4px;
    padding-bottom: 5px;
    padding-left: 1px;
    border-bottom: 1px solid #383838;
}

.opt {
    display: flex;
    align-items: center;
    gap: 4px;
    color: #a8a8a8;
    font-size: 11.5px;
    white-space: nowrap;
}

.check {
    width: 12px;
    height: 12px;
    border: 1px solid #6c6c6c;
    border-radius: 2px;
    flex-shrink: 0;
    display: flex;
}

.check-on {
    background: #a6a6a6;
    border-color: #a6a6a6;
}

.check svg {
    margin: -1px;
}

.copies-row {
    height: 33px;
    margin-top: 4px;
    display: flex;
    align-items: center;
    font-size: 11.5px;
    color: #a0a0a0;
}

.copies-label {
    margin-left: 90px;
    color: #858585;
}

.field-copies {
    width: 53px;
    margin-left: 3px;
}

.dialog-foot {
    display: flex;
    align-items: center;
    height: 26px;
    margin-top: 18px;
    gap: 5px;
    padding-left: 1px;
}

.btn {
    width: 88px;
    height: 26px;
    border-radius: 13px;
    line-height: 24px;
    text-align: center;
}

.btn-ok {
    margin-left: auto;
    background: #3c9cf0;
    border: 1px solid #3c9cf0;
    color: #fff;
}

.btn-cancel {
    border: 2px solid #bdbdbd;
    color: #cfcfcf;
}

.cursor {
    position: absolute;
    left: 1002px;
    top: 583px;
}

.activate {
    position: absolute;
    left: 1026px;
    top: 635px;
    color: #777;
    pointer-events: none;
}

.activate-big {
    font-family: "Open Sans", sans-serif;
    font-size: 18.5px;
    line-height: 22px;
}

.activate-small {
    font-family: "Open Sans", sans-serif;
    font-size: 13.8px;
    line-height: 22px;
}

/* channel logo */
.watermark {
    position: absolute;
    left: 1120px;
    top: 10px;
    width: 160px;
}

.watermark svg {
    display: block;
}

.watermark-text {
    margin: 1px 0 0 26px;
    font-family: "Liberation Serif", serif;
    font-weight: 700;
    font-size: 19.3px;
    line-height: 19px;
    white-space: nowrap;
    background: linear-gradient(to right, #2e95ab 0%, #2e8fae 60%, #5a3fb0 100%);
    -webkit-background-clip: text;
    background-clip: text;
    color: transparent;
}
```
